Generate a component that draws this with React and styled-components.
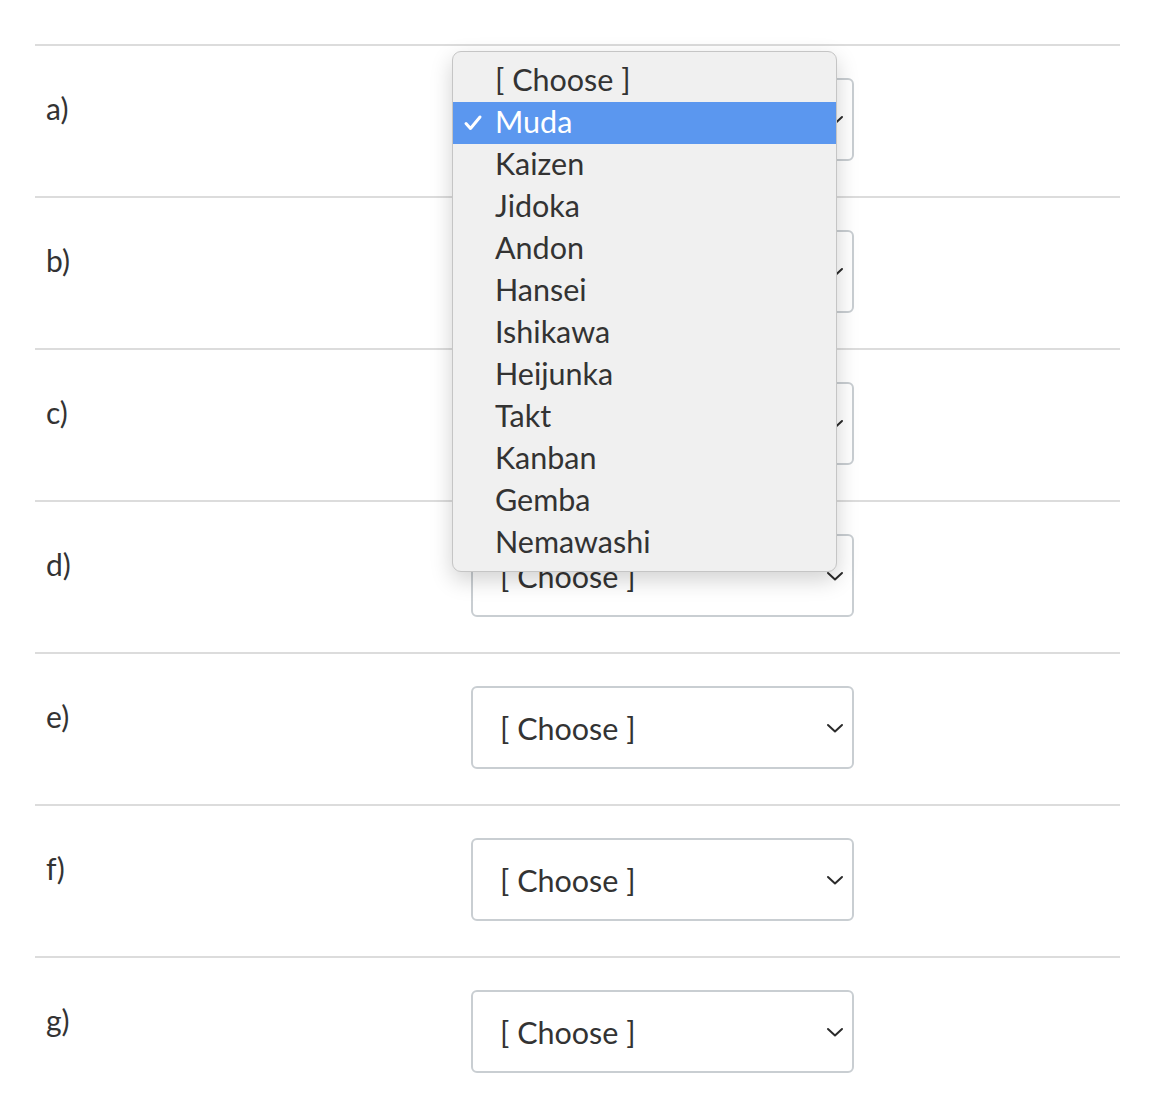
import React from "react";
import styled, { createGlobalStyle } from "styled-components";

const GlobalStyle = createGlobalStyle`
  html, body {
    margin: 0;
    padding: 0;
    background: #ffffff;
  }
  body {
    font-family: Lato, "Noto Sans", sans-serif;
    color: #333333;
  }
`;

const Page = styled.div`
  position: relative;
  width: 1158px;
  padding: 44px 38px 0 35px;
  box-sizing: border-box;
`;

const Row = styled.div`
  display: flex;
  align-items: flex-start;
  border-top: 2px solid #dcdcdc;
  padding: 32px 0 0;
  height: 152px;
  box-sizing: border-box;
  &:last-child {
    height: auto;
    padding-bottom: 45px;
  }
`;

const Label = styled.div`
  width: 436px;
  padding-left: 11px;
  box-sizing: border-box;
  margin-top: 11px;
  font-size: 30px;
  line-height: 38px;
  color: #333333;
`;

const SelectBox = styled.div`
  position: relative;
  width: 383px;
  height: 83px;
  box-sizing: border-box;
  border: 2px solid #c9ced2;
  border-radius: 6px;
  display: flex;
  align-items: center;
  justify-content: space-between;
  padding: 0 8px 0 27px;
  font-size: 30.5px;
  color: #333333;
  background: #ffffff;
`;

const Chevron = () => (
  <svg width="18" height="10" viewBox="0 0 18 10" fill="none">
    <path d="M2 2l7 6.5L16 2" stroke="#2b2b2b" strokeWidth="2" strokeLinecap="round" strokeLinejoin="round" />
  </svg>
);

const Menu = styled.ul`
  position: absolute;
  left: 452px;
  top: 51px;
  width: 385px;
  margin: 0;
  padding: 8px 0 7px;
  box-sizing: border-box;
  list-style: none;
  background: #f0f0f0;
  border: 1px solid #c5c5c5;
  border-radius: 9px;
  box-shadow: 0 8px 22px rgba(0, 0, 0, 0.18);
  z-index: 5;
`;

const Item = styled.li`
  position: relative;
  height: 42px;
  line-height: 38px;
  padding-left: 42px;
  font-size: 30.5px;
  color: ${(p) => (p.$active ? "#ffffff" : "#333333")};
  background: ${(p) => (p.$active ? "#5b97ef" : "transparent")};
`;

const Check = styled.svg`
  position: absolute;
  left: 10px;
  top: 12px;
`;

const rows = ["a)", "b)", "c)", "d)", "e)", "f)", "g)"];
const options = [
  "[ Choose ]",
  "Muda",
  "Kaizen",
  "Jidoka",
  "Andon",
  "Hansei",
  "Ishikawa",
  "Heijunka",
  "Takt",
  "Kanban",
  "Gemba",
  "Nemawashi",
];

export default function App() {
  return (
    <>
      <GlobalStyle />
      <Page>
        {rows.map((r) => (
          <Row key={r}>
            <Label>{r}</Label>
            <SelectBox>
              <span>[ Choose ]</span>
              <Chevron />
            </SelectBox>
          </Row>
        ))}
        <Menu>
          {options.map((o) => (
            <Item key={o} $active={o === "Muda"}>
              {o === "Muda" && (
                <Check width="20" height="18" viewBox="0 0 20 18" fill="none">
                  <path d="M3 9.5l4.5 5L17 3" stroke="#ffffff" strokeWidth="3" strokeLinecap="round" strokeLinejoin="round" />
                </Check>
              )}
              {o}
            </Item>
          ))}
        </Menu>
      </Page>
    </>
  );
}
